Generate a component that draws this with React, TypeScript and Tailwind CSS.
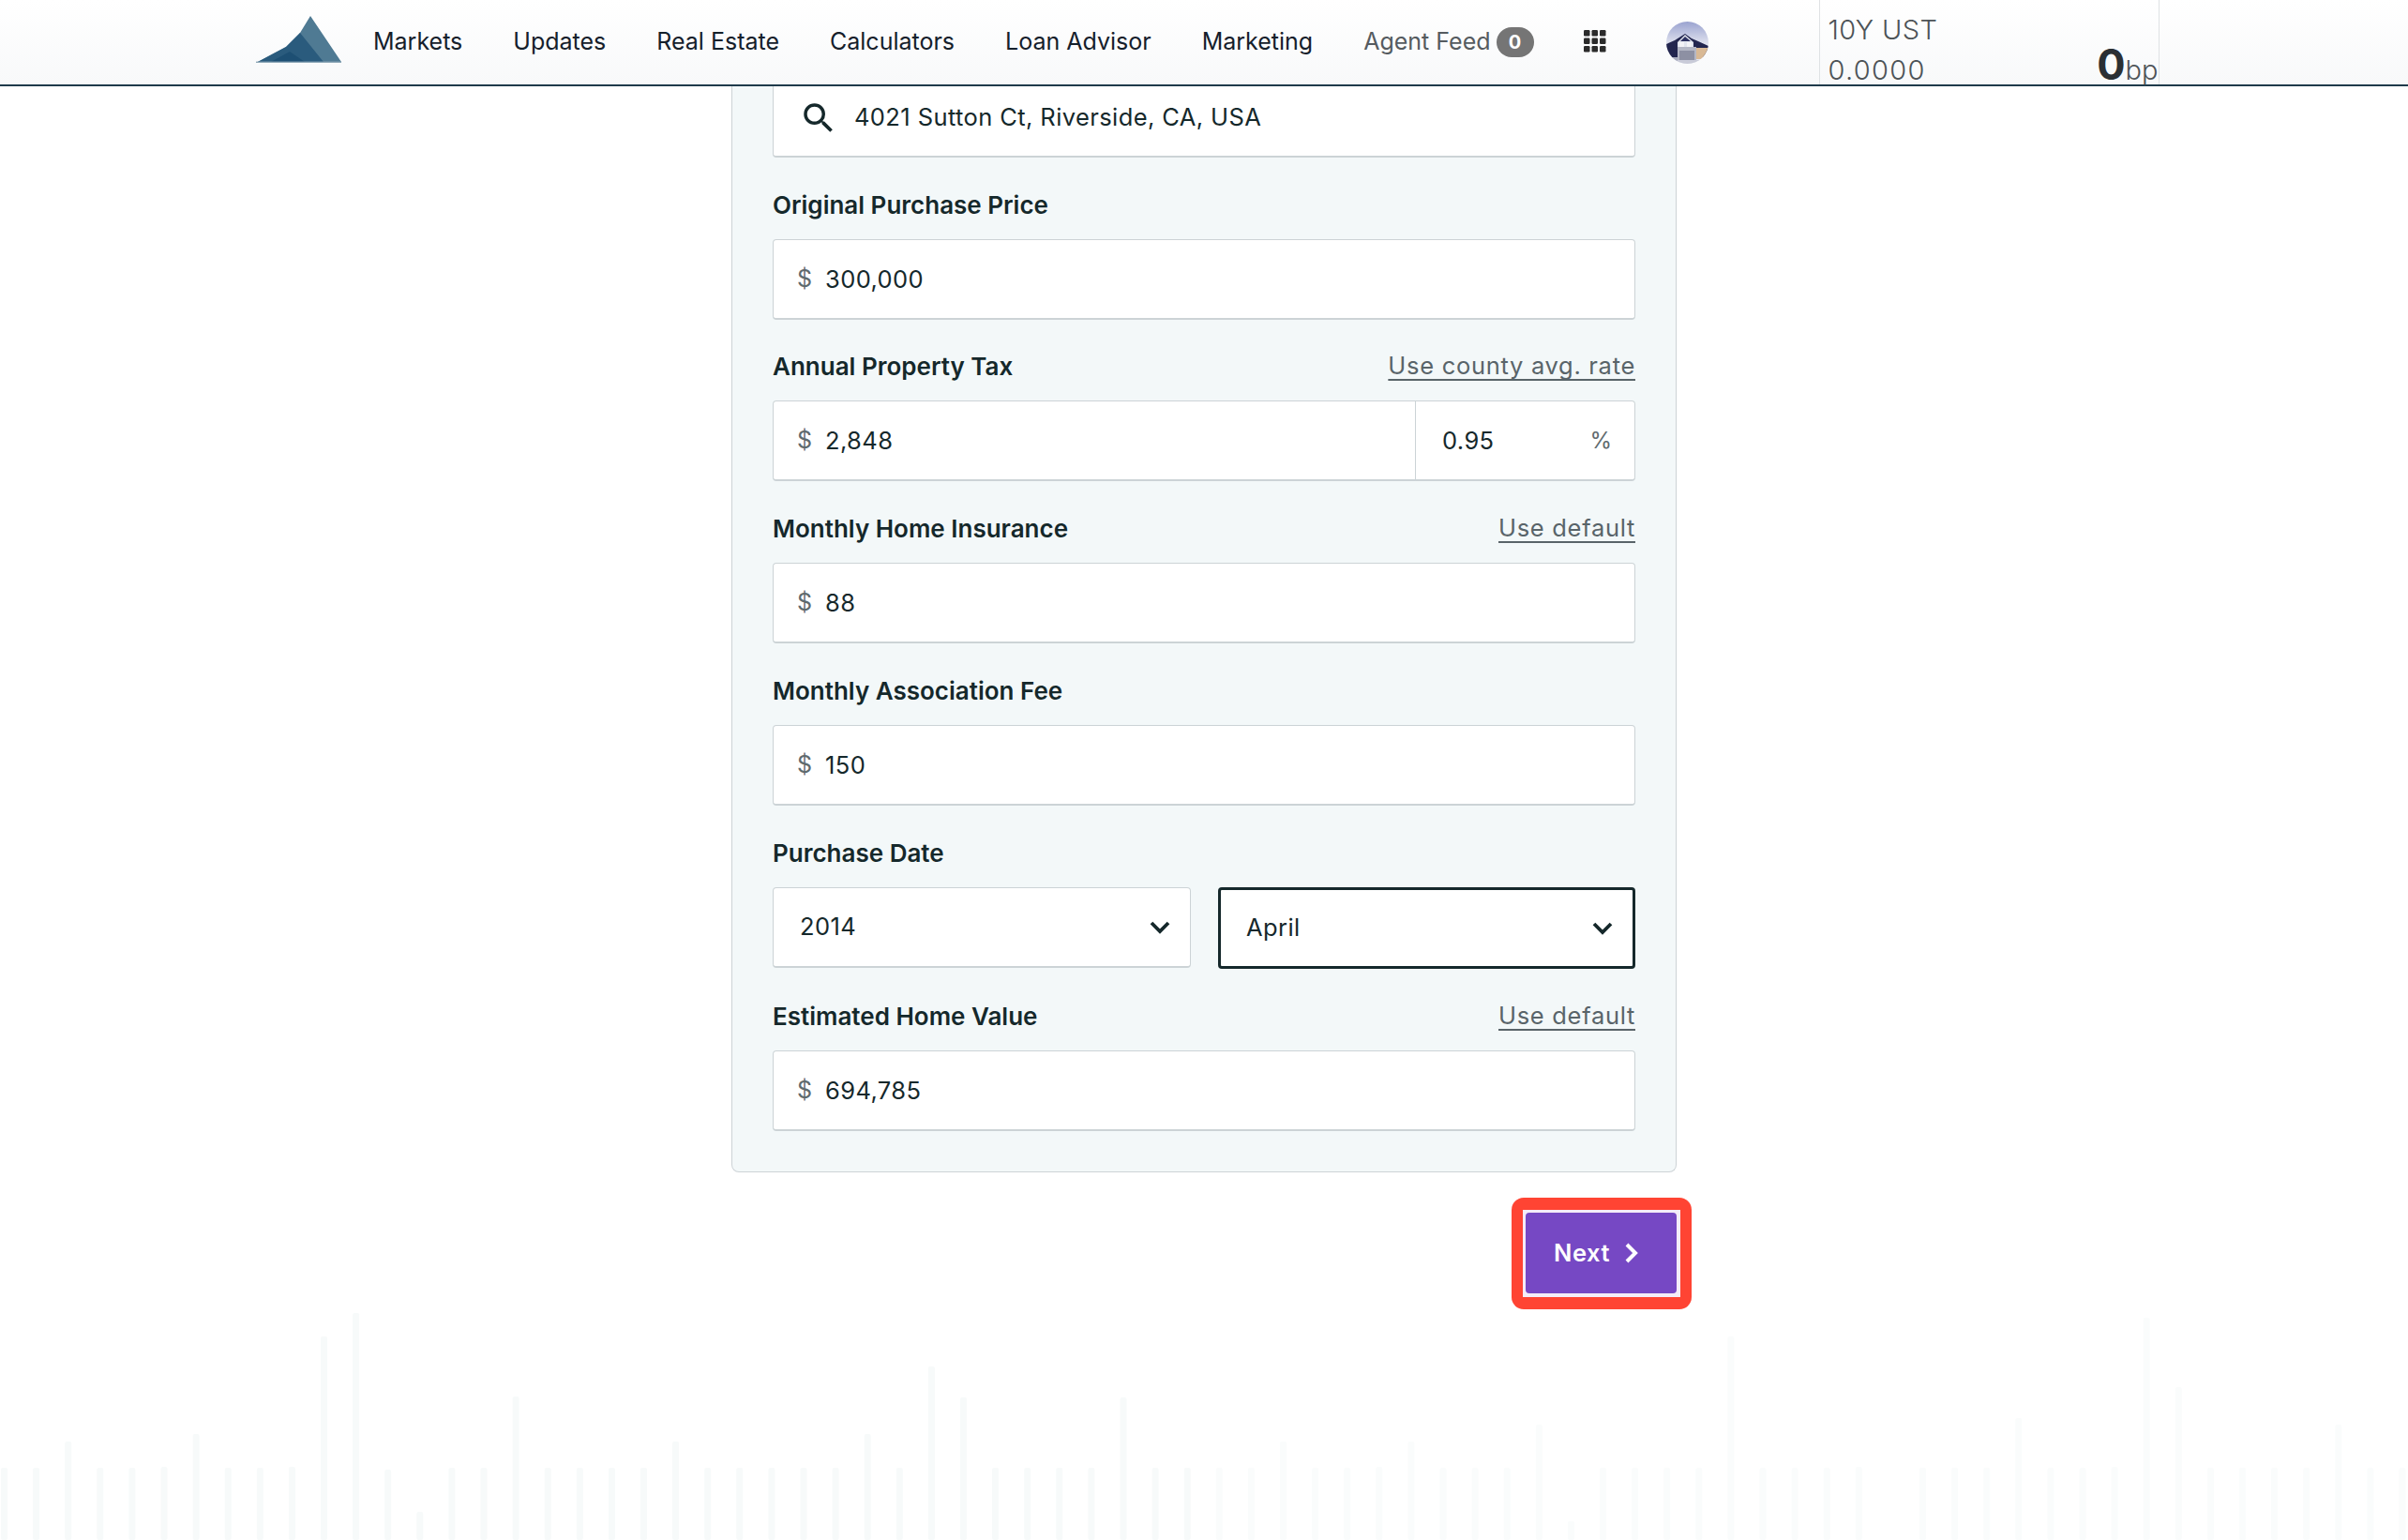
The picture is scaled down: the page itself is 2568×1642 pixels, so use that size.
import { ReactNode } from 'react';
import { MdSearch } from 'react-icons/md';

const navItems = ['Markets', 'Updates', 'Real Estate', 'Calculators', 'Loan Advisor', 'Marketing'];

// bar heights of the faint chart behind the page foot, left to right
const bars = [
  77, 77, 105, 77, 77, 78, 113, 77, 77, 78, 217, 242, 75, 30, 77, 77, 153, 77, 77, 77, 77, 105, 77, 77, 77, 77, 77, 113,
  77, 185, 152, 77, 77, 77, 77, 152, 77, 77, 77, 77, 105, 77, 77, 78, 105, 77, 77, 77, 123, 20, 77, 77, 77, 77, 217, 77,
  77, 77, 78, 0, 77, 77, 77, 130, 77, 77, 78, 237, 163, 77, 77, 77, 77, 123, 77, 77,
];

function Logo() {
  return (
    <svg width="92" height="52" viewBox="0 0 92 52" className="shrink-0">
      <polygon points="0,50 32,33 47,18 58,0 91,49" fill="#4f7a93" />
      <polygon points="0,50 32,33 47,18 72,49" fill="#2a5b7d" />
      <polygon points="14,50 36,38 52,49" fill="#1d4f73" />
      <rect x="0" y="48.6" width="91" height="1.4" fill="#8fa9b8" />
    </svg>
  );
}

function Avatar() {
  return (
    <svg width="45" height="45" viewBox="0 0 45 45" className="shrink-0">
      <defs>
        <clipPath id="avatar-clip">
          <circle cx="22.5" cy="22.5" r="22.5" />
        </clipPath>
        <linearGradient id="avatar-sky" x1="0" y1="0" x2="0" y2="1">
          <stop offset="0" stopColor="#9aa3d0" />
          <stop offset="0.55" stopColor="#e3e5f0" />
        </linearGradient>
      </defs>
      <g clipPath="url(#avatar-clip)">
        <rect width="45" height="45" fill="url(#avatar-sky)" />
        <polygon points="0,24 9,20 20,13 27,18 34,21 45,26 45,38 0,38" fill="#23264f" />
        <polygon points="12,22 20,14 29,22 29,27 12,27" fill="#e2e5ee" />
        <polygon points="15,21 20,16 26,21" fill="#2d3160" />
        <rect x="14" y="22" width="5" height="5" fill="#f3f3f6" />
        <rect x="22" y="22" width="5" height="5" fill="#f3f3f6" />
        <rect x="12" y="27" width="20" height="14" fill="#b4b7c5" />
        <rect x="14" y="31" width="16" height="10" fill="#8d90a3" />
        <rect x="32" y="28" width="13" height="12" fill="#d9b995" />
        <rect x="0" y="38" width="12" height="7" fill="#a9acbe" />
        <rect x="12" y="41" width="33" height="4" fill="#c9cbd8" />
      </g>
    </svg>
  );
}

function AppsIcon() {
  return (
    <svg width="24" height="24" viewBox="0 0 24 24" className="shrink-0" fill="#2b2b2b">
      {[0, 8.5, 17].map((y) =>
        [0, 8.5, 17].map((x) => <rect key={`${x}-${y}`} x={x} y={y} width="6.5" height="6.5" rx="1.2" />)
      )}
    </svg>
  );
}

function Chevron() {
  return (
    <svg width="22" height="14" viewBox="0 0 22 14" className="shrink-0">
      <polyline points="2,2 11,11 20,2" fill="none" stroke="#15282b" strokeWidth="3.8" />
    </svg>
  );
}

function Field({ label, link, className, children }: { label: string; link?: string; className?: string; children: ReactNode }) {
  return (
    <div className={className}>
      <div className="flex h-[35px] items-center justify-between mb-[19px]">
        <span className="text-[26px] font-semibold text-[#15282b]">{label}</span>
        {link && (
          <a className="text-[25.5px] tracking-[0.7px] text-[#596469] underline decoration-2 underline-offset-[5px]">{link}</a>
        )}
      </div>
      {children}
    </div>
  );
}

function MoneyInput({ value }: { value: string }) {
  return (
    <div className="flex h-[86px] items-center rounded-[4px] border border-[#ccd3d6] border-b-2 bg-white pl-[25px] pt-[1px]">
      <span className="w-[30px] text-[25px] text-[#5f6a6e]">$</span>
      <span className="text-[25.5px] tracking-[0.4px] text-[#15282b]">{value}</span>
    </div>
  );
}

function SelectBox({ value, focused }: { value: string; focused?: boolean }) {
  return (
    <div
      className={
        focused
          ? 'flex h-[87px] w-[445px] items-center justify-between rounded-[4px] border-[3px] border-[#15282b] bg-white pl-[27px] pr-[21px]'
          : 'flex h-[86px] w-[446px] items-center justify-between rounded-[4px] border border-[#ccd3d6] border-b-2 bg-white pl-[28px] pr-[21px]'
      }
    >
      <span className="text-[25.5px] tracking-[0.4px] text-[#15282b]">{value}</span>
      <Chevron />
    </div>
  );
}

export default function App() {
  return (
    <div className="relative h-[1642px] overflow-hidden bg-white [font-family:Inter,sans-serif]">
      <svg className="absolute bottom-0 left-0" width="2568" height="262" viewBox="0 0 2568 262">
        {bars.map((h, i) => (
          <rect key={i} x={1 + i * 34.1} y={262 - h} width="7" height={h} rx="2" fill={i < 38 ? '#f7fafa' : '#fafcfc'} />
        ))}
      </svg>

      <header className="relative flex h-[92px] items-center border-b-2 border-[#1f3b4b] bg-gradient-to-b from-white to-[#f8f9fa] pl-[273px]">
        <div className="mt-[-5px] flex items-center">
          <Logo />
        </div>
        <nav className="ml-[33px] flex items-center gap-[54px] text-[25px] text-[#15202b]">
          {navItems.map((item) => (
            <a key={item}>{item}</a>
          ))}
          <a className="flex items-center gap-[6px] text-[#555b60]">
            Agent Feed
            <span className="flex h-[32px] w-[40px] items-center justify-center rounded-full bg-[#757575] text-[20px] font-bold text-white">
              0
            </span>
          </a>
        </nav>
        <div className="ml-[53px] mt-[-2px]">
          <AppsIcon />
        </div>
        <div className="ml-[64px] mt-[1px]">
          <Avatar />
        </div>
        <div className="ml-[118px] flex h-full w-[363px] flex-col justify-between border-x border-[#dfe2e4] pl-[9px] text-[29px] font-light text-[#4d5357]">
          <span className="mt-[13px] leading-[38px] tracking-[0.4px]">10Y UST</span>
          <div className="flex items-baseline justify-between">
            <span className="mb-[2px] leading-[36px] tracking-[1.3px]">0.0000</span>
            <span className="leading-[36px]">
              <span className="text-[45px] font-bold text-[#2b2f33]">0</span>bp
            </span>
          </div>
        </div>
      </header>

      <main className="relative">
        <section className="mx-auto flex w-[1008px] flex-col gap-[33px] rounded-b-[8px] border-x border-b border-[#cdd3d6] bg-[#f3f8f9] px-[43px] pb-[43px]">
          <div className="flex h-[76px] items-center rounded-b-[4px] border-x border-b-2 border-[#ccd3d6] bg-white pb-[7px] pl-[27px]">
            <MdSearch size={42} color="#15282b" />
            <span className="ml-[17px] text-[25.5px] tracking-[0.4px] text-[#15282b]">4021 Sutton Ct, Riverside, CA, USA</span>
          </div>

          <Field label="Original Purchase Price">
            <MoneyInput value="300,000" />
          </Field>

          <Field label="Annual Property Tax" link="Use county avg. rate" className="-mt-[1px]">
            <div className="flex h-[86px] items-center rounded-[4px] border border-[#ccd3d6] border-b-2 bg-white">
              <div className="flex h-full w-[685px] items-center border-r border-[#ccd3d6] pl-[25px] pt-[1px]">
                <span className="w-[30px] text-[25px] text-[#5f6a6e]">$</span>
                <span className="text-[25.5px] tracking-[0.4px] text-[#15282b]">2,848</span>
              </div>
              <div className="flex flex-1 items-center justify-between pl-[28px] pr-[24px] pt-[1px]">
                <span className="text-[25.5px] tracking-[0.4px] text-[#15282b]">0.95</span>
                <span className="text-[24px] text-[#5f6a6e]">%</span>
              </div>
            </div>
          </Field>

          <Field label="Monthly Home Insurance" link="Use default">
            <MoneyInput value="88" />
          </Field>

          <Field label="Monthly Association Fee">
            <MoneyInput value="150" />
          </Field>

          <Field label="Purchase Date">
            <div className="flex justify-between">
              <SelectBox value="2014" />
              <SelectBox value="April" focused />
            </div>
          </Field>

          <Field label="Estimated Home Value" link="Use default">
            <MoneyInput value="694,785" />
          </Field>
        </section>

        <div className="mx-auto mt-[27px] flex w-[1008px] justify-end">
          <div className="mr-[-16px] rounded-[13px] bg-[#ff4433] px-[12px] py-[13px]">
            <div className="bg-[#f4ecf8] pb-[4px] pl-[3px] pr-[4px] pt-[3px]">
              <button className="flex h-[86px] w-[161px] items-center gap-[15px] rounded-[4px] bg-[#7648c4] pl-[30px] text-[25.5px] font-semibold tracking-[0.6px] text-white">
                Next
                <svg width="16" height="24" viewBox="0 0 16 24">
                  <polyline points="3,3 12,12 3,21" fill="none" stroke="white" strokeWidth="4" />
                </svg>
              </button>
            </div>
          </div>
        </div>
      </main>
    </div>
  );
}
